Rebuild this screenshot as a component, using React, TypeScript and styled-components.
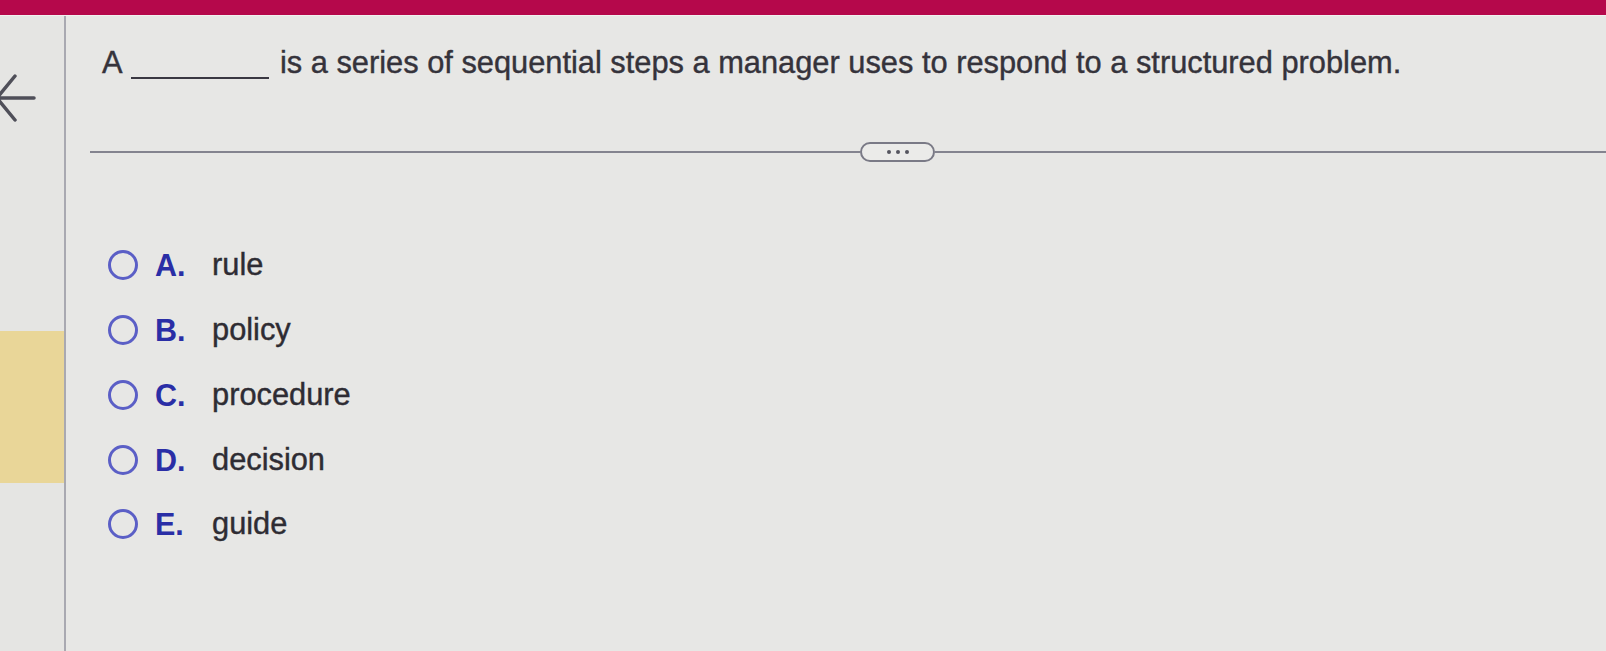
import React from "react";
import styled, { createGlobalStyle } from "styled-components";

const Global = createGlobalStyle`
  html, body { margin: 0; padding: 0; }
  body {
    font-family: "Liberation Sans", Arial, Helvetica, sans-serif;
    background: #e7e7e5;
  }
`;

const Page = styled.div`
  width: 100%;
  height: 100vh;
  display: flex;
  flex-direction: column;
  background: #e7e7e5;
  overflow: hidden;
`;

const TopBar = styled.div`
  height: 15px;
  flex: none;
  background: #b5084b;
  border-bottom: 1px solid #f1f1ef;
`;

const Body = styled.div`
  flex: 1;
  display: flex;
  min-height: 0;
`;

const Sidebar = styled.aside`
  width: 64px;
  flex: none;
  border-right: 2px solid #a9a9b1;
  background: #e5e5e3;
  display: flex;
  flex-direction: column;
  padding-top: 58px;
  box-sizing: content-box;
`;

const BackButton = styled.button`
  width: 36px;
  height: 50px;
  padding: 0;
  margin: 0;
  border: none;
  background: transparent;
  display: block;
  overflow: hidden;
  cursor: pointer;
`;

const Highlight = styled.div`
  margin-top: 207px;
  height: 152px;
  background: #e9d698;
`;

const Main = styled.main`
  flex: 1;
  display: flex;
  flex-direction: column;
  min-width: 0;
`;

const Question = styled.p`
  margin: 0;
  padding: 29px 0 0 36px;
  font-size: 30.8px;
  line-height: 36px;
  color: #35333b;
  -webkit-text-stroke: 0.4px #35333b;
  white-space: nowrap;
`;

const Blank = styled.span`
  display: inline-block;
  width: 138px;
  height: 0;
  margin: 0 2px;
  border-bottom: 2px solid #3a3842;
  vertical-align: -6px;
`;

const Divider = styled.div`
  margin: 61px 0 0 24px;
  height: 20px;
  display: flex;
  align-items: center;
`;

const Rule = styled.div<{ $width?: number }>`
  height: 2px;
  background: #84848f;
  ${(p) => (p.$width ? `width: ${p.$width}px; flex: none;` : `flex: 1;`)}
`;

const MorePill = styled.button`
  width: 75px;
  height: 20px;
  flex: none;
  box-sizing: border-box;
  border: 2px solid #7a7a86;
  border-radius: 10px;
  background: #ebebe9;
  display: flex;
  align-items: center;
  justify-content: center;
  gap: 5px;
  padding: 0;
  cursor: pointer;
`;

const Dot = styled.span`
  width: 4px;
  height: 4px;
  border-radius: 50%;
  background: #55555f;
`;

const Options = styled.ul`
  list-style: none;
  margin: 71px 0 0 0;
  padding: 0 0 0 42px;
  display: flex;
  flex-direction: column;
`;

const Option = styled.li`
  height: 64.75px;
  display: flex;
  align-items: center;
`;

const Radio = styled.span`
  width: 30px;
  height: 30px;
  box-sizing: border-box;
  border: 3px solid #5b5fc6;
  border-radius: 50%;
  flex: none;
`;

const Letter = styled.span`
  width: 57px;
  margin-left: 17px;
  flex: none;
  font-size: 30.5px;
  line-height: 36px;
  font-weight: 700;
  color: #2a2ea6;
`;

const OptionText = styled.span`
  font-size: 30.8px;
  line-height: 36px;
  color: #2e2c33;
  -webkit-text-stroke: 0.4px #2e2c33;
`;

const options = [
  { letter: "A.", text: "rule" },
  { letter: "B.", text: "policy" },
  { letter: "C.", text: "procedure" },
  { letter: "D.", text: "decision" },
  { letter: "E.", text: "guide" },
];

export default function App() {
  return (
    <>
      <Global />
      <Page>
        <TopBar />
        <Body>
          <Sidebar>
            <BackButton aria-label="Back">
              <svg width="36" height="50" viewBox="0 0 36 50">
                <path
                  d="M34 24 H0 M15 2 L-3 24 L15 46"
                  fill="none"
                  stroke="#4f4f59"
                  strokeWidth="3.5"
                  strokeLinecap="round"
                  strokeLinejoin="round"
                />
              </svg>
            </BackButton>
            <Highlight />
          </Sidebar>
          <Main>
            <Question>
              A <Blank /> is a series of sequential steps a manager uses to respond to a structured problem.
            </Question>
            <Divider>
              <Rule $width={770} />
              <MorePill aria-label="More">
                <Dot />
                <Dot />
                <Dot />
              </MorePill>
              <Rule />
            </Divider>
            <Options>
              {options.map((o) => (
                <Option key={o.letter}>
                  <Radio />
                  <Letter>{o.letter}</Letter>
                  <OptionText>{o.text}</OptionText>
                </Option>
              ))}
            </Options>
          </Main>
        </Body>
      </Page>
    </>
  );
}
